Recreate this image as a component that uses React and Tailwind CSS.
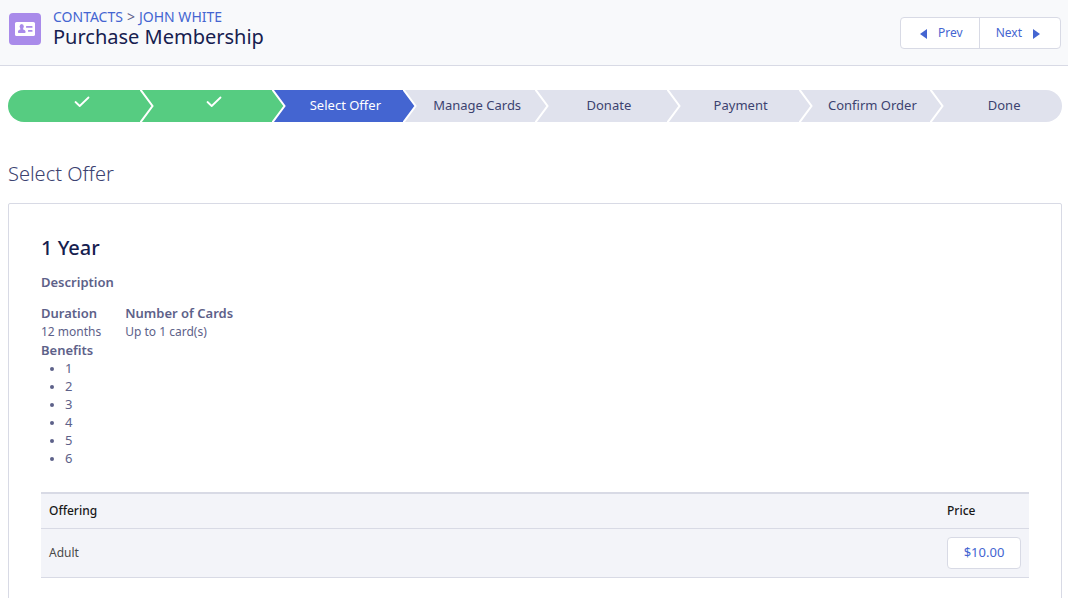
const steps = [
  { label: 'Select Offer 1', state: 'complete' },
  { label: 'Select Offer 2', state: 'complete' },
  { label: 'Select Offer', state: 'current' },
  { label: 'Manage Cards', state: 'open' },
  { label: 'Donate', state: 'open' },
  { label: 'Payment', state: 'open' },
  { label: 'Confirm Order', state: 'open' },
  { label: 'Done', state: 'open' },
]

const stepStyles = {
  complete: 'bg-[#56cc81] text-[#56cc81]',
  current: 'bg-[#4465d1] text-[#4465d1]',
  open: 'bg-[#e0e2ed] text-[#e0e2ed]',
}

const labelStyles = {
  complete: 'text-white',
  current: 'text-white',
  open: 'text-[#3c4270]',
}

const benefits = ['1', '2', '3', '4', '5', '6']

function ContactIcon() {
  return (
    <svg viewBox="0 0 32 32" className="size-8 shrink-0 rounded bg-[#a98bea]" aria-hidden="true">
      <rect x="6" y="9" width="20" height="14" rx="1.6" fill="#fff" />
      <g fill="#a98bea">
        <ellipse cx="12.7" cy="13.4" rx="2.1" ry="2.5" />
        <path d="M11.500 15h2.400v1.300c1.600.5 2.700 1.200 2.700 2.600 0 .7-.3 1.100-.9 1.100H9.800c-.6 0-.9-.4-.9-1.100 0-1.400 1.100-2.100 2.600-2.600z" />
        <rect x="17" y="13" width="6.500" height="1.800" rx=".6" />
        <rect x="19" y="17" width="4.500" height="1.800" rx=".6" />
      </g>
    </svg>
  )
}

function Path() {
  return (
    <ol className="flex h-8 overflow-hidden rounded-full">
      {steps.map((step, i) => (
        <li key={i} className={`relative flex flex-1 justify-center pl-4 ${stepStyles[step.state]}`}>
          {i < steps.length - 1 && (
            <svg viewBox="0 0 15 32" className="absolute top-0 left-full z-10 h-8 w-[15px]" aria-hidden="true">
              <path d="M-1 0H1L12.500 16L1 32H-1z" fill="currentColor" />
              <path d="M0 -1L12.500 16L0 33" fill="none" stroke="#fff" strokeWidth="2" />
            </svg>
          )}
          {step.state === 'complete' ? (
            <svg viewBox="0 0 16 12" className="mt-1.5 h-3 w-4" role="img" aria-label="Stage complete">
              <path d="M1.500 6L5.700 10L14.500 1.500" fill="none" stroke="#fff" strokeWidth="1.800" strokeLinecap="round" strokeLinejoin="round" />
            </svg>
          ) : (
            <span className={`text-[13px] leading-[31px] whitespace-nowrap ${labelStyles[step.state]}`}>{step.label}</span>
          )}
        </li>
      ))}
    </ol>
  )
}

export default function App() {
  return (
    <div className="min-h-screen bg-white font-['Noto_Sans',sans-serif] text-[13px] leading-[18px] text-[#5d6189]">
      <header className="flex items-start justify-between border-b border-[#d8dae5] bg-[#f8f9fb] pt-2 pr-[7px] pb-4 pl-[9px]">
        <div className="flex items-center gap-3">
          <ContactIcon />
          <div>
            <nav aria-label="Breadcrumb" className="flex gap-1 text-sm leading-[17px]">
              <a href="#contacts" className="text-[#4465d1]">CONTACTS</a>
              <span>&gt;</span>
              <a href="#john-white" className="text-[#4465d1]">JOHN WHITE</a>
            </nav>
            <h1 className="text-xl leading-6 text-[#16204f]">Purchase Membership</h1>
          </div>
        </div>
        <div className="mt-[9px] flex h-8 rounded border border-[#d8dae5] bg-white text-xs text-[#4465d1]">
          <button type="button" className="flex items-center gap-[11px] border-r border-[#d8dae5] pr-4 pl-[19px]">
            <svg viewBox="0 0 7 10" className="mt-0.5 h-2.5 w-[7px]" aria-hidden="true"><path d="M7 0V10L0 5z" fill="currentColor" /></svg>
            Prev
          </button>
          <button type="button" className="flex items-center gap-[11px] pr-5 pl-4">
            Next
            <svg viewBox="0 0 7 10" className="mt-0.5 h-2.5 w-[7px]" aria-hidden="true"><path d="M0 0V10L7 5z" fill="currentColor" /></svg>
          </button>
        </div>
      </header>

      <main className="pt-6 pr-1.5 pl-2">
        <Path />
        <h2 className="mt-[39px] text-xl leading-[25px] font-light text-[#3c4270]">Select Offer</h2>
        <section className="mt-[17px] rounded-xs border border-[#d8dae5] px-8 pt-8 pb-6">
          <h3 className="text-xl leading-6 font-medium text-[#16204f]">1 Year</h3>
          <p className="mt-[13px] font-semibold">Description</p>
          <dl className="mt-[13px] flex gap-6">
            <div>
              <dt className="font-semibold">Duration</dt>
              <dd className="text-xs leading-[19px]">12 months</dd>
            </div>
            <div>
              <dt className="font-semibold">Number of Cards</dt>
              <dd className="text-xs leading-[19px]">Up to 1 card(s)</dd>
            </div>
          </dl>
          <p className="font-semibold">Benefits</p>
          <ul className="list-disc pl-6">
            {benefits.map((b) => <li key={b} className="marker:text-[11px]">{b}</li>)}
          </ul>
          <table className="mt-[25px] w-full border-t-2 border-b border-[#d8dae5] bg-[#f3f4f9] text-left text-xs">
            <thead>
              <tr className="h-[35px] border-b border-[#d8dae5] text-[#181818]">
                <th scope="col" className="px-2 font-medium">Offering</th>
                <th scope="col" className="w-[90px] px-2 font-medium">Price</th>
              </tr>
            </thead>
            <tbody>
              <tr className="h-[49px] text-[#4a4a4a]">
                <td className="px-2">Adult</td>
                <td className="px-2">
                  <button type="button" className="h-8 w-full rounded border border-[#d8dae5] bg-white text-[13px] text-[#4465d1]">$10.00</button>
                </td>
              </tr>
            </tbody>
          </table>
        </section>
      </main>
    </div>
  )
}
